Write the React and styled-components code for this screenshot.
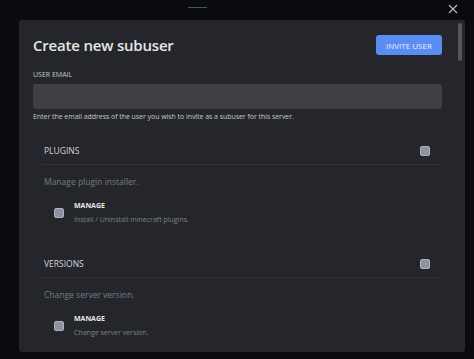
import React from "react";
import styled, { createGlobalStyle } from "styled-components";

const Global = createGlobalStyle`
  html, body { margin: 0; padding: 0; background: #0a0b0e; }
  body { font-family: "Open Sans", "Noto Sans", sans-serif; overflow: hidden; }
  * { box-sizing: border-box; }
`;

const Page = styled.div`
  width: 474px;
  height: 359px;
  position: relative;
  padding: 20px 9px 0 19px;
  overflow: hidden;
`;

const TopBar = styled.div`
  position: absolute;
  left: 188px;
  top: 7px;
  width: 19px;
  height: 1px;
  background: #4a5263;
`;

const Close = styled.button`
  position: absolute;
  right: 15px;
  top: 3px;
  width: 12px;
  height: 12px;
  padding: 0;
  border: 0;
  background: none;
  display: flex;
  align-items: center;
  justify-content: center;
`;

const Modal = styled.div`
  position: relative;
  width: 446px;
  height: 332px;
  background: #25262b;
  border-radius: 3px;
  padding: 15px 23px 0 14px;
`;

const Scrollbar = styled.div`
  position: absolute;
  right: 3px;
  top: 3px;
  width: 4px;
  height: 38px;
  border-radius: 2px;
  background: #55575c;
`;

const Header = styled.div`
  display: flex;
  align-items: center;
  justify-content: space-between;
  height: 20px;
`;

const Title = styled.h2`
  margin: 0;
  font-size: 15px;
  font-weight: 600;
  color: #e4e6ea;
  letter-spacing: -0.2px;
`;

const Button = styled.button`
  width: 66px;
  height: 20px;
  border: 0;
  border-radius: 3px;
  background: #5a8df2;
  color: #e9efff;
  font-family: inherit;
  font-size: 8px;
  padding: 0;
`;

const Label = styled.div`
  margin-top: 15px;
  font-size: 7px;
  line-height: 10px;
  color: #c6c9ce;
`;

const Input = styled.div`
  margin-top: 4px;
  height: 25px;
  border-radius: 3px;
  background: #3f4045;
`;

const Help = styled.div`
  font-size: 7px;
  line-height: 12px;
  margin-top: 2px;
  color: #c3c6cb;
  letter-spacing: -0.05px;
`;

const Section = styled.div`
  margin: ${(p) => p.$top}px 2px 0 8px;
`;

const SectionHead = styled.div`
  height: 28px;
  display: flex;
  align-items: center;
  justify-content: space-between;
  padding: 0 10px 0 3px;
  border-bottom: 1px solid #303137;
`;

const SectionTitle = styled.div`
  font-size: 8.5px;
  color: #d2d5da;
`;

const Desc = styled.div`
  margin-top: 9px;
  padding-left: 3px;
  font-size: 8.5px;
  line-height: 16px;
  color: #767b83;
`;

const PermRow = styled.div`
  margin-top: 9px;
  display: flex;
  align-items: center;
  padding-left: 13px;
  gap: 10px;
`;

const Box = styled.span`
  display: inline-block;
  width: 10px;
  height: 10px;
  border-radius: 2px;
  background: #8c94a4;
  border: 1px solid #abb2be;
`;

const PermText = styled.div`
  display: flex;
  flex-direction: column;
`;

const PermName = styled.div`
  font-size: 7px;
  font-weight: 700;
  line-height: 14px;
  color: #e6e7e9;
`;

const PermSub = styled.div`
  font-size: 7px;
  line-height: 14px;
  color: #7d828a;
`;

const sections = [
  {
    title: "PLUGINS",
    desc: "Manage plugin installer.",
    perm: "MANAGE",
    sub: "Install / Uninstall minecraft plugins.",
    top: 14,
  },
  {
    title: "VERSIONS",
    desc: "Change server version.",
    perm: "MANAGE",
    sub: "Change server version.",
    top: 23,
  },
];

export default function App() {
  return (
    <>
      <Global />
      <Page>
        <TopBar />
        <Close aria-label="Close">
          <svg width="10" height="10" viewBox="0 0 10 10">
            <path d="M1 1L9 9M9 1L1 9" stroke="#b9bcc2" strokeWidth="1.1" />
          </svg>
        </Close>
        <Modal>
          <Scrollbar />
          <Header>
            <Title>Create new subuser</Title>
            <Button>INVITE USER</Button>
          </Header>
          <Label>USER EMAIL</Label>
          <Input />
          <Help>
            Enter the email address of the user you wish to invite as a subuser for this server.
          </Help>
          {sections.map((s) => (
            <Section key={s.title} $top={s.top}>
              <SectionHead>
                <SectionTitle>{s.title}</SectionTitle>
                <Box />
              </SectionHead>
              <Desc>{s.desc}</Desc>
              <PermRow>
                <Box />
                <PermText>
                  <PermName>{s.perm}</PermName>
                  <PermSub>{s.sub}</PermSub>
                </PermText>
              </PermRow>
            </Section>
          ))}
        </Modal>
      </Page>
    </>
  );
}
